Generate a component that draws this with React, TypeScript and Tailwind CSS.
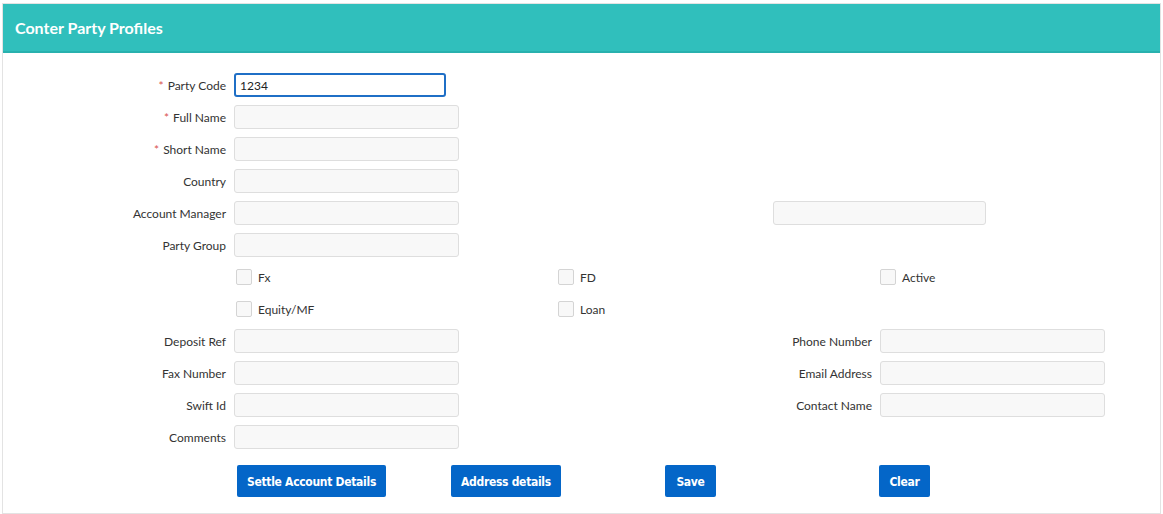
import * as React from "react"

const font = { fontFamily: "Lato, 'Open Sans', sans-serif" }

function Label({ text, required, wide }: { text: string; required?: boolean; wide?: boolean }) {
  return (
    <label className={`${wide ? "w-[421px]" : "w-[231px]"} shrink-0 pr-[8px] pt-[2px] text-right text-[12px] text-[#333]`}>
      {required && <span className="mr-[4px] text-[#d9534f]">*</span>}
      {text}
    </label>
  )
}

function Field({ value, focused, className = "w-[225px]" }: { value?: string; focused?: boolean; className?: string }) {
  const [v, setV] = React.useState(value ?? "")
  return (
    <input
      value={v}
      onChange={e => setV(e.target.value)}
      autoFocus={focused}
      className={`${className} h-[24px] shrink-0 rounded-[3px] px-[4px] pt-[1px] text-[12px] text-[#222] outline-none ${
        focused ? "border-2 border-[#1f6fc6] bg-white" : "border border-[#dedede] bg-[#f8f8f8]"
      }`}
    />
  )
}

function Check({ label, className = "w-[322px]" }: { label: string; className?: string }) {
  return (
    <div className={`${className} flex shrink-0 items-center gap-[6px]`}>
      <span className="h-[16px] w-[16px] rounded-[2px] border border-[#d4d4d4] bg-[#f8f8f8]" />
      <span className="pt-[2px] text-[12px] text-[#333]">{label}</span>
    </div>
  )
}

function Row({ children }: { children: React.ReactNode }) {
  return <div className="flex h-[32px] items-center">{children}</div>
}

export default function App() {
  return (
    <div className="min-h-screen bg-white px-[2px] pt-[3px]" style={font}>
      <div className="border border-[#e3e3e3]">
        <div className="flex h-[49px] items-center border-b-2 border-[#29b1ae] bg-[#30bfbc] px-[12px]">
          <h1 className="pt-[1px] text-[16px] font-bold text-white">Conter Party Profiles</h1>
        </div>

        <div className="pb-[16px] pt-[16px]">
          <Row>
            <Label text="Party Code" required />
            <Field value="1234" focused className="w-[212px]" />
          </Row>
          <Row>
            <Label text="Full Name" required />
            <Field />
          </Row>
          <Row>
            <Label text="Short Name" required />
            <Field />
          </Row>
          <Row>
            <Label text="Country" />
            <Field />
          </Row>
          <Row>
            <Label text="Account Manager" />
            <Field />
            <div className="w-[314px] shrink-0" />
            <Field className="w-[213px]" />
          </Row>
          <Row>
            <Label text="Party Group" />
            <Field />
          </Row>

          <Row>
            <div className="w-[233px] shrink-0" />
            <Check label="Fx" />
            <Check label="FD" />
            <Check label="Active" className="w-auto" />
          </Row>
          <Row>
            <div className="w-[233px] shrink-0" />
            <Check label="Equity/MF" />
            <Check label="Loan" />
          </Row>

          <Row>
            <Label text="Deposit Ref" />
            <Field />
            <Label text="Phone Number" wide />
            <Field />
          </Row>
          <Row>
            <Label text="Fax Number" />
            <Field />
            <Label text="Email Address" wide />
            <Field />
          </Row>
          <Row>
            <Label text="Swift Id" />
            <Field />
            <Label text="Contact Name" wide />
            <Field />
          </Row>
          <Row>
            <Label text="Comments" />
            <Field />
          </Row>

          <div className="mt-[12px] flex pl-[234px]">
            {["Settle Account Details", "Address details", "Save", "Clear"].map(b => (
              <div key={b} className="w-[214px] shrink-0">
                <button
                  className="h-[32px] min-w-[51px] rounded-[2px] bg-[#0466c8] px-[10px] pt-[1px] text-[12px] font-bold tracking-tight text-white"
                  style={{ fontFamily: "'Liberation Sans Narrow', 'DejaVu Sans Condensed', Roboto, sans-serif" }}
                >
                  {b}
                </button>
              </div>
            ))}
          </div>
        </div>
      </div>
    </div>
  )
}
